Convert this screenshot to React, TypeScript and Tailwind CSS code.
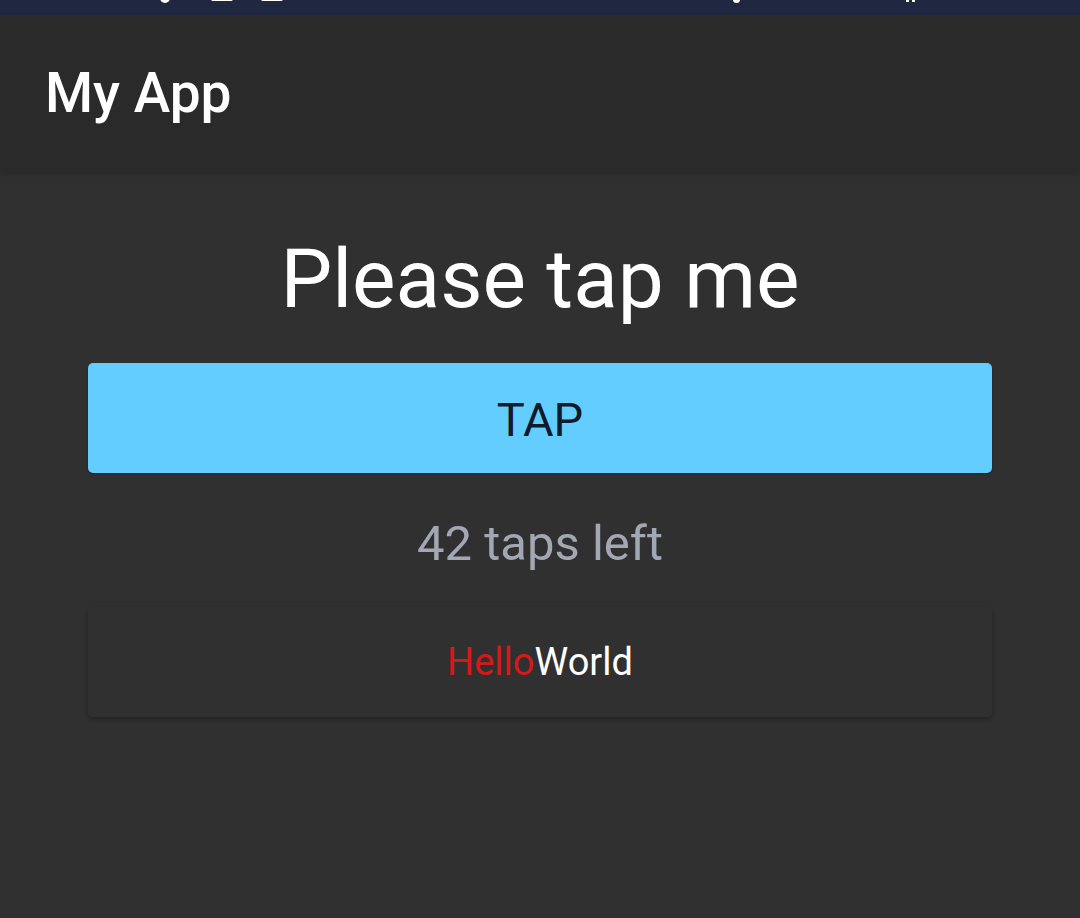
import React, { useState } from "react";

function StatusBar() {
  return (
    <div className="relative h-[15px] w-full overflow-hidden bg-[#1f2840]">
      {/* clipped status icons peeking from the top edge */}
      <div className="absolute left-[160px] top-[-8px] h-[11px] w-[10px] rounded-full bg-white" />
      <div className="absolute left-[211px] top-[-4px] h-[5px] w-[22px] rounded-[2px] border-2 border-white" />
      <div className="absolute left-[261px] top-[-4px] h-[5px] w-[22px] rounded-[2px] border-2 border-white" />
      <div className="absolute left-[733px] top-[-6px] h-[9px] w-[7px] rounded-full bg-white" />
      <div className="absolute left-[906px] top-[-4px] h-[6px] w-[3px] bg-white" />
      <div className="absolute left-[912px] top-[-4px] h-[6px] w-[3px] bg-white" />
    </div>
  );
}

export default function App() {
  const [taps, setTaps] = useState<number>(42);

  return (
    <div className="flex min-h-[918px] w-full flex-col bg-[#303030] font-['Roboto',sans-serif]">
      <StatusBar />
      <header className="z-10 flex h-[157px] items-center bg-[#2a2a2a] px-[45px] shadow-[0_2px_5px_rgba(0,0,0,0.2)]">
        <h1 className="text-[55px] font-medium leading-none text-white">My App</h1>
      </header>
      <main className="flex flex-col items-center px-[88px] pt-[66px]">
        <p className="text-[82px] leading-none text-white">Please tap me</p>
        <button
          onClick={() => setTaps((t) => (t > 0 ? t - 1 : 0))}
          className="mt-[43px] flex h-[110px] w-full items-center justify-center rounded-[5px] bg-[#62cdfe] pt-[3px] text-[47px] leading-none text-[#0f1b2b] shadow-[0_1px_2px_rgba(0,0,0,0.3)]"
        >
          TAP
        </button>
        <p className="mt-[46px] text-[49px] leading-none text-[#a3a7b4]">{taps} taps left</p>
        <div className="mt-[39px] flex h-[110px] w-full items-center justify-center rounded-[3px] bg-[#303030] shadow-[0_2px_5px_rgba(0,0,0,0.3)]">
          <span className="text-[38px] leading-none">
            <span className="text-[#d4191a]">Hello</span>
            <span className="text-white">World</span>
          </span>
        </div>
      </main>
    </div>
  );
}
